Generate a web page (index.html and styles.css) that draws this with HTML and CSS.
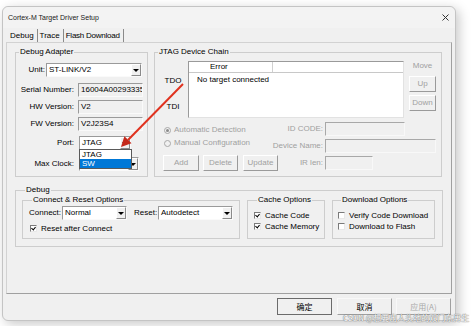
FILE: index.html
```html
<!DOCTYPE html>
<html lang="en">
<head>
  <meta charset="UTF-8" />
  <meta name="viewport" content="width=device-width, initial-scale=1.0"/>
  <title>Cortex-M Target Driver Setup</title>
  <link rel="stylesheet" href="styles.css">
</head>
<body>

  <div class="window">
    <div class="titlebar">
      <span class="title">Cortex-M Target Driver Setup</span>
      <svg class="close" width="7" height="7" viewBox="0 0 7 7"><path d="M0.5 0.5L6.5 6.5M6.5 0.5L0.5 6.5" stroke="#333" stroke-width="1"/></svg>
    </div>

    <div class="tabs">
      <span class="tab active">Debug</span>
      <span class="tab">Trace</span>
      <span class="tab">Flash Download</span>
    </div>

    <div class="page">
      <div class="top-row">

        <!-- Debug Adapter -->
        <fieldset class="group adapter">
          <legend>Debug Adapter</legend>
          <div class="row row-unit">
            <span class="lbl lbl-unit">Unit:</span>
            <div class="combo combo-unit"><span class="val">ST-LINK/V2</span><span class="drop"></span></div>
          </div>
          <div class="row row-serial">
            <span class="lbl">Serial Number:</span>
            <div class="field">16004A00293335</div>
          </div>
          <div class="row row-hw">
            <span class="lbl">HW Version:</span>
            <div class="field">V2</div>
          </div>
          <div class="row row-fw">
            <span class="lbl">FW Version:</span>
            <div class="field">V2J23S4</div>
          </div>
          <div class="row row-port">
            <span class="lbl">Port:</span>
            <div class="combo combo-port">
              <span class="val">JTAG</span><span class="drop"></span>
              <ul class="dropdown">
                <li>JTAG</li>
                <li class="selected">SW</li>
              </ul>
            </div>
          </div>
          <div class="row row-clock">
            <span class="lbl">Max Clock:</span>
            <div class="combo combo-clock"><span class="val"></span><span class="drop"></span></div>
          </div>
        </fieldset>

        <!-- JTAG Device Chain -->
        <fieldset class="group jtag">
          <legend>JTAG Device Chain</legend>
          <div class="chain-row">
            <div class="pins">
              <span>TDO</span>
              <span>TDI</span>
            </div>
            <div class="chain">
              <div class="chain-head"><span class="col-error">Error</span><span class="col-rest"></span></div>
              <div class="chain-body">No target connected</div>
            </div>
            <div class="move-col">
              <span class="move-lbl">Move</span>
              <span class="btn disabled btn-up">Up</span>
              <span class="btn disabled btn-down">Down</span>
            </div>
          </div>
          <div class="config-row">
            <div class="config-left">
              <div class="radio disabled"><span class="dot on"></span>Automatic Detection</div>
              <div class="radio disabled"><span class="dot"></span>Manual Configuration</div>
              <div class="btn-row">
                <span class="btn disabled btn-add">Add</span>
                <span class="btn disabled btn-delete">Delete</span>
                <span class="btn disabled btn-update">Update</span>
              </div>
            </div>
            <div class="config-right">
              <div class="id-row"><span class="id-lbl">ID CODE:</span><span class="field off w-id"></span></div>
              <div class="id-row"><span class="id-lbl">Device Name:</span><span class="field off w-name"></span></div>
              <div class="id-row"><span class="id-lbl">IR len:</span><span class="field off w-ir"></span></div>
            </div>
          </div>
        </fieldset>
      </div>

      <!-- Debug -->
      <fieldset class="group debug">
        <legend>Debug</legend>
        <div class="debug-row">
          <fieldset class="group sub sub-connect">
            <legend>Connect &amp; Reset Options</legend>
            <div class="connect-row">
              <span class="lbl-connect">Connect:</span>
              <div class="combo combo-connect"><span class="val">Normal</span><span class="drop"></span></div>
              <span class="lbl-reset">Reset:</span>
              <div class="combo combo-reset"><span class="val">Autodetect</span><span class="drop"></span></div>
            </div>
            <div class="check check-reset"><span class="box on"></span>Reset after Connect</div>
          </fieldset>
          <fieldset class="group sub sub-cache">
            <legend>Cache Options</legend>
            <div class="check"><span class="box on"></span>Cache Code</div>
            <div class="check"><span class="box on"></span>Cache Memory</div>
          </fieldset>
          <fieldset class="group sub sub-download">
            <legend>Download Options</legend>
            <div class="check"><span class="box"></span>Verify Code Download</div>
            <div class="check"><span class="box"></span>Download to Flash</div>
          </fieldset>
        </div>
      </fieldset>
    </div>

    <div class="footer">
      <span class="dlg-btn default">确定</span>
      <span class="dlg-btn">取消</span>
      <span class="dlg-btn disabled">应用(A)</span>
    </div>
  </div>

  <!-- annotation laid over the screenshot -->
  <svg class="arrow" width="474" height="326" viewBox="0 0 474 326">
    <line x1="183" y1="84" x2="128" y2="140" stroke="#e0321f" stroke-width="2"/>
    <polygon points="121,147 131.5,143.3 124.4,136.3" fill="#c4281a"/>
  </svg>

  <div class="watermark">CSDN @想要出人头地的双门东男生</div>

</body>
</html>
```

FILE: styles.css
```css
/* RESET & BASE */
* {
  box-sizing: border-box;
  margin: 0;
  padding: 0;
}

body {
  width: 474px;
  height: 326px;
  overflow: hidden;
  position: relative;
  background: #fff;
  font-family: "Liberation Sans", Arial, "Noto Sans CJK SC", sans-serif;
  font-size: 8px;
  line-height: 10px;
  color: #000;
}

/* WINDOW */
.window {
  width: 454px;
  height: 315px;
  margin: 6px 0 0 2px;
  background: #f0f0f0;
  border: 1px solid #c4c4c4;
  border-radius: 6px;
  box-shadow: 3px 3px 12px rgba(0, 0, 0, 0.22);
  display: flex;
  flex-direction: column;
}

.titlebar {
  height: 21px;
  display: flex;
  align-items: center;
  justify-content: space-between;
  padding: 0 6px 0 5px;
  background: #f3f3f3;
  border-radius: 6px 6px 0 0;
}

.title {
  font-size: 7px;
  color: #1a1a1a;
}

.close {
  display: block;
}

/* TABS */
.tabs {
  height: 14px;
  display: flex;
  align-items: flex-end;
  padding-left: 5px;
}

.tab {
  height: 13px;
  line-height: 13px;
  padding: 0 3px 0 2px;
  border-right: 1px solid #8a8a8a;
}

.tab:last-child {
  letter-spacing: -0.25px;
}

.page {
  width: 446px;
  height: 252px;
  margin-left: 3px;
  border: 1px solid;
  border-color: #d2d2d2 #a0a0a0 #a0a0a0 #d2d2d2;
  padding: 4px 0 0 8px;
}

/* GROUP BOXES */
fieldset.group {
  border: 1px solid #cdcdcd;
  min-width: 0;
}

fieldset.group legend {
  margin-left: 3px;
  padding: 0 1px;
  line-height: 10px;
}

.top-row {
  display: flex;
  gap: 6px;
}

.adapter {
  width: 133px;
  height: 130px;
  padding-top: 6px;
}

.row {
  display: flex;
  align-items: center;
  height: 14px;
  gap: 4px;
}

.row-serial { margin-top: 6px; }
.row-hw, .row-fw { margin-top: 3px; }
.row-port { margin-top: 5px; }
.row-clock { margin-top: 7px; }

.lbl {
  width: 58px;
  text-align: right;
  white-space: nowrap;
}

.row-unit { gap: 1px; }
.lbl-unit { width: 29px; }

.field {
  height: 14px;
  line-height: 12px;
  padding-left: 2px;
  border: 1px solid;
  border-color: #9a9a9a #fafafa #fafafa #9a9a9a;
  white-space: nowrap;
  overflow: hidden;
}

.adapter .field {
  width: 65px;
}

/* COMBO BOX */
.combo {
  position: relative;
  height: 14px;
  display: flex;
  background: #fff;
  border: 1px solid;
  border-color: #9a9a9a #fafafa #fafafa #9a9a9a;
}

.combo .val {
  flex: 1;
  line-height: 12px;
  padding-left: 2px;
  white-space: nowrap;
}

.combo .drop {
  width: 10px;
  height: 12px;
  background: #f0f0f0;
  border: 1px solid;
  border-color: #fff #8a8a8a #8a8a8a #fff;
  display: flex;
  align-items: center;
  justify-content: center;
}

.combo .drop::after {
  content: '';
  border-top: 3px solid #000;
  border-left: 3px solid transparent;
  border-right: 3px solid transparent;
}

.combo-unit { width: 96px; }
.combo-port { width: 52px; margin-left: 1px; }
.combo-clock { width: 60px; margin-left: 1px; }

.dropdown {
  position: absolute;
  top: 12px;
  left: -1px;
  width: 53px;
  height: 20px;
  list-style: none;
  background: #fff;
  border: 1px solid #5a5a5a;
  z-index: 2;
}

.dropdown li {
  height: 9px;
  line-height: 9px;
  padding-left: 2px;
}

.dropdown li.selected {
  background: #0078d7;
  color: #fff;
}

/* JTAG DEVICE CHAIN */
.jtag {
  width: 288px;
  height: 130px;
  padding-top: 4px;
}

.chain-row {
  display: flex;
  height: 57px;
}

.pins {
  width: 33px;
  display: flex;
  flex-direction: column;
  align-items: center;
  gap: 16px;
  padding: 15px 0 0 3px;
}

.chain {
  width: 216px;
  background: #fff;
  border: 1px solid;
  border-color: #9a9a9a #e2e2e2 #e2e2e2 #9a9a9a;
}

.chain-head {
  display: flex;
  height: 11px;
  border-bottom: 1px solid #c8c8c8;
}

.col-error {
  width: 84px;
  padding-left: 21px;
  border-right: 1px solid #d0d0d0;
}

.chain-body {
  padding: 2px 0 0 8px;
}

.move-col {
  width: 27px;
  margin-left: 5px;
  display: flex;
  flex-direction: column;
  color: #a0a0a0;
}

.move-lbl {
  text-align: center;
  margin-bottom: 5px;
}

.btn {
  display: block;
  height: 16px;
  line-height: 14px;
  text-align: center;
  border: 1px solid;
  border-color: #fff #9a9a9a #9a9a9a #fff;
}

.btn.disabled {
  color: #a0a0a0;
}

.btn-down {
  margin-top: 3px;
}

.config-row {
  display: flex;
  margin-top: 4px;
}

.config-left {
  width: 125px;
  padding-left: 8px;
  color: #a0a0a0;
}

.radio {
  display: flex;
  align-items: center;
  height: 10px;
  margin-top: 3px;
  white-space: nowrap;
}

.dot {
  width: 7px;
  height: 7px;
  margin: 0 3px 0 1px;
  border-radius: 50%;
  border: 1px solid #a8a8a8;
  background: #f0f0f0;
  display: flex;
  align-items: center;
  justify-content: center;
}

.dot.on::after {
  content: '';
  width: 3px;
  height: 3px;
  border-radius: 50%;
  background: #8a8a8a;
}

.btn-row {
  display: flex;
  margin-top: 7px;
}

.btn-add { width: 36px; }
.btn-delete { width: 35px; margin-left: 4px; }
.btn-update { width: 35px; margin-left: 5px; }

.config-right {
  display: flex;
  flex-direction: column;
  gap: 3px;
}

.id-row {
  display: flex;
  align-items: center;
  gap: 2px;
}

.id-lbl {
  width: 43px;
  display: flex;
  justify-content: flex-end;
  white-space: nowrap;
  color: #a0a0a0;
}

.field.off {
  display: block;
  background: #f0f0f0;
  border-color: #a8a8a8 #f8f8f8 #f8f8f8 #a8a8a8;
}

.w-id { width: 80px; }
.w-name { width: 111px; }
.w-ir { width: 48px; }

/* DEBUG */
.debug {
  width: 428px;
  height: 62px;
  margin-top: 8px;
  padding-left: 6px;
}

.debug-row {
  display: flex;
  gap: 7px;
}

.sub {
  height: 44px;
}

.sub-connect {
  width: 218px;
  padding: 1px 0 0 6px;
}

.sub-cache {
  width: 78px;
  padding: 5px 0 0 6px;
}

.sub-download {
  width: 103px;
  padding: 5px 0 0 5px;
}

.connect-row {
  display: flex;
  align-items: center;
  height: 14px;
}

.lbl-connect {
  width: 33px;
}

.combo-connect { width: 65px; }

.lbl-reset {
  margin-left: 7px;
  width: 24px;
  white-space: nowrap;
}

.combo-reset { width: 75px; }

.check {
  display: flex;
  align-items: center;
  height: 11px;
  white-space: nowrap;
}

.check-reset {
  margin-top: 3px;
  padding-left: 1px;
}

.box {
  width: 7px;
  height: 7px;
  margin-right: 4px;
  background: #fff;
  border: 1px solid;
  border-color: #7a7a7a #e8e8e8 #e8e8e8 #7a7a7a;
  position: relative;
}

.box.on::after {
  content: '';
  position: absolute;
  left: 1px;
  top: 0;
  width: 2px;
  height: 3px;
  border: solid #000;
  border-width: 0 1px 1px 0;
  transform: rotate(40deg);
}

/* FOOTER */
.footer {
  display: flex;
  justify-content: flex-end;
  padding: 4px 4px 0 0;
  font-family: "Noto Sans CJK SC", sans-serif;
}

.dlg-btn {
  width: 55px;
  height: 17px;
  line-height: 15px;
  text-align: center;
  font-size: 8px;
  margin-left: 4px;
  border: 1px solid;
  border-color: #f8f8f8 #a0a0a0 #a0a0a0 #f8f8f8;
}

.dlg-btn.default {
  border-color: #6b6b6b;
  margin-right: 1px;
}

.dlg-btn.disabled {
  color: #a8a8a8;
}

/* OVERLAYS */
.arrow {
  position: absolute;
  left: 0;
  top: 0;
  pointer-events: none;
}

.watermark {
  position: absolute;
  left: 343px;
  top: 313px;
  font-family: "Noto Sans CJK SC", sans-serif;
  font-size: 8px;
  line-height: 10px;
  color: #fff;
  white-space: nowrap;
  text-shadow: 0 0 1px #666, 0 0 1px #666;
}
```
